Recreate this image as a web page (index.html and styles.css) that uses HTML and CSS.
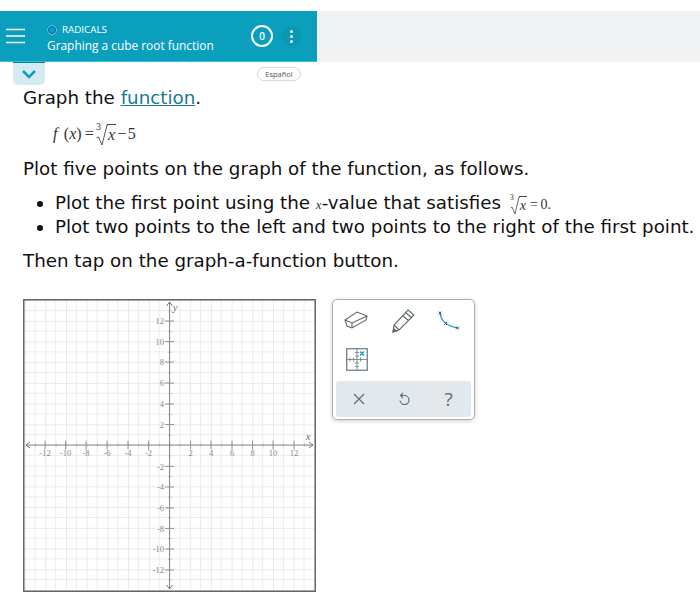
FILE: index.html
```html
<!DOCTYPE html>
<html lang="en">
<head>
<meta charset="UTF-8" />
<title>Graphing a cube root function</title>
<link rel="stylesheet" href="styles.css">
</head>
<body>
<!-- Top bar -->
<div class="topbar">
  <div class="topbar-main">
    <svg class="menu" width="20" height="16" viewBox="0 0 20 16"><path d="M0 1.500h19M0 8h19M0 14.500h19" stroke="#fff" stroke-width="1.600"/></svg>
    <div class="titles">
      <div class="topic"><span class="topic-dot"></span>RADICALS</div>
      <div class="title">Graphing a cube root function</div>
    </div>
    <div class="score">0</div>
    <div class="more"><i></i><i></i><i></i></div>
  </div>
</div>

<div class="subbar">
  <div class="drop">
    <svg width="16" height="10" viewBox="0 0 16 10"><path d="M2 2l6 6 6-6" fill="none" stroke="#0a9fbd" stroke-width="2.600"/></svg>
  </div>
  <div class="lang">Español</div>
</div>

<!-- Question text -->
<div class="question">
  <p class="intro">Graph the <a href="#">function</a>.</p>
  <div class="formula">
    <i>f</i>&#8201;&#8201;(<i>x</i>)&#8201;=&#8201;<span class="root"><sup>3</sup><svg width="12" height="22" viewBox="0 0 12 22"><path d="M0.500 14l2-1 3.500 8L11 1h1" fill="none" stroke="#444" stroke-width="0.900"/></svg><i class="radicand">x</i></span>&#8202;−&#8202;5
  </div>
  <p>Plot five points on the graph of the function, as follows.</p>
  <ul>
    <li>Plot the first point using the <i class="mathvar">x</i>-value that satisfies <span class="inline-math"><span class="root small"><sup>3</sup><svg width="10" height="19" viewBox="0 0 10 19"><path d="M0.500 12l1.500-1 3 7L9 1h1" fill="none" stroke="#444" stroke-width="0.800"/></svg><i class="radicand">x</i></span>&#8201;=&#8201;0.</span></li>
    <li>Plot two points to the left and two points to the right of the first point.</li>
  </ul>
  <p>Then tap on the graph-a-function button.</p>
</div>

<!-- Graph and tools -->
<div class="workspace">
  <svg class="graph" width="293" height="293" viewBox="0 0 293 293">
    <defs>
      <pattern id="grid" x="0" y="0" width="20.700" height="20.700" patternUnits="userSpaceOnUse" patternTransform="translate(146.500 146)">
        <path d="M0 0V20.700M0 0H20.700" stroke="#e4e4e4" stroke-width="1.500" fill="none"/>
        <path d="M10.350 0V20.700M0 10.350H20.700" stroke="#ececec" stroke-width="1" fill="none"/>
      </pattern>
      <pattern id="ticks-x" x="0" y="0" width="10.350" height="10" patternUnits="userSpaceOnUse" patternTransform="translate(146.500 141)">
        <path d="M0 3V7" stroke="#aaa" stroke-width="1"/>
      </pattern>
      <pattern id="ticks-y" x="0" y="0" width="10" height="10.350" patternUnits="userSpaceOnUse" patternTransform="translate(141.500 146)">
        <path d="M3 0H8" stroke="#aaa" stroke-width="1"/>
      </pattern>
    </defs>
    <rect width="293" height="293" fill="url(#grid)"/>
    <rect x="3" y="141" width="287" height="10" fill="url(#ticks-x)"/>
    <rect x="141.500" y="3" width="10" height="287" fill="url(#ticks-y)"/>
    <path d="M3 146H290M146.500 3V290" stroke="#888" stroke-width="1"/>
    <path d="M7 143l-4 3 4 3M286 143l4 3-4 3M143.500 7l3-4 3 4M143.500 286l3 4 3-4" fill="none" stroke="#777" stroke-width="1"/>
    <path d="M22 141.500v9M42.500 141.500v9M63 141.500v9M84 141.500v9M105 141.500v9M125.500 141.500v9M167.500 141.500v9M188 141.500v9M209 141.500v9M229.500 141.500v9M250 141.500v9M271 141.500v9" stroke="#999"/>
    <path d="M142 22h9M142 42.500h9M142 63h9M142 84h9M142 105h9M142 125.500h9M142 167.500h9M142 188h9M142 209h9M142 229.500h9M142 250h9M142 271h9" stroke="#999"/>
    <g class="tick-labels x-labels">
      <text x="22" y="157">-12</text><text x="42.500" y="157">-10</text><text x="63" y="157">-8</text><text x="84" y="157">-6</text><text x="105" y="157">-4</text><text x="125.500" y="157">-2</text>
      <text x="167.500" y="157">2</text><text x="188" y="157">4</text><text x="209" y="157">6</text><text x="229.500" y="157">8</text><text x="250" y="157">10</text><text x="271" y="157">12</text>
    </g>
    <g class="tick-labels y-labels">
      <text x="141" y="25">12</text><text x="141" y="45.500">10</text><text x="141" y="66">8</text><text x="141" y="87">6</text><text x="141" y="108">4</text><text x="141" y="128.500">2</text>
      <text x="141" y="170.500">-2</text><text x="141" y="191">-4</text><text x="141" y="212">-6</text><text x="141" y="232.500">-8</text><text x="141" y="253">-10</text><text x="141" y="274">-12</text>
    </g>
    <text class="axis-name" x="283" y="141">x</text>
    <text class="axis-name" x="150" y="12">y</text>
    <rect x="0.750" y="0.750" width="291.500" height="291.500" fill="none" stroke="#666" stroke-width="1.500"/>
  </svg>

  <div class="tools">
    <div class="tool-grid">
      <svg width="26" height="20" viewBox="0 0 26 20" fill="none" stroke="#5f6b70" stroke-width="1.100"><path d="M1 9L13 1l10 4-1 4-14 8-5-2z"/><path d="M1 9l7 3L23 5M8 12v5"/></svg>
      <svg width="24" height="24" viewBox="0 0 24 24" fill="none" stroke="#5f6b70" stroke-width="1.100"><path d="M17 1l6 5L8 21l-6 2 1-7z"/><path d="M14.500 3.500l6 5M11.500 6.500l6 5M3 16l5 5"/><path d="M2 23l0.700-3.500 2.800 2.600z" fill="#5f6b70"/></svg>
      <svg width="24" height="24" viewBox="0 0 24 24" fill="none"><path d="M3 4c1 8 6 13 18 15" stroke="#0a9fbd" stroke-width="1.300"/><path d="M1.500 2.500l3 3M4.500 2.500l-3 3M7 13l3 3M10 13l-3 3M19 17.500l3 3M22 17.500l-3 3" stroke="#4d5a60" stroke-width="1"/></svg>
      <svg width="22" height="23" viewBox="0 0 22 23" fill="none"><rect x="0.750" y="0.750" width="20.500" height="21.500" stroke="#68767c" stroke-width="1.200"/><path d="M1 11.500h20M11 1v21" stroke="#68767c" stroke-width="0.800" /><path d="M4 9.500v4M7.500 9.500v4M14.500 9.500v4M9 4.500h4M9 8h4M9 15h4M9 18.500h4" stroke="#68767c" stroke-width="0.800"/><path d="M14 3.500l4 4M18 3.500l-4 4" stroke="#0a9fbd" stroke-width="1.400"/></svg>
    </div>
    <div class="tool-actions">
      <svg width="12" height="12" viewBox="0 0 12 12"><path d="M1 1l10 10M11 1L1 11" stroke="#5f6b70" stroke-width="1.100"/></svg>
      <svg width="12" height="14" viewBox="0 0 12 14" fill="none" stroke="#5f6b70" stroke-width="1.100"><path d="M2.500 3.500h4a4.500 4.500 0 1 1-4.500 5"/><path d="M5 1L2.500 3.500 5 6"/></svg>
      <span class="help">?</span>
    </div>
  </div>
</div>
</body>
</html>
```

FILE: styles.css
```css
body {
margin: 0;
padding-top: 11px;
background: #fff;
color: #111;
font-family: "DejaVu Sans", sans-serif;
font-size: 18.270px;
overflow: hidden;
}
.topbar {
height: 51px;
background: #f0f2f3;
}
.topbar-main {
width: 317px;
height: 50px;
background: #0a9fbd;
border-bottom: 1px solid #2fc0d8;
display: flex;
align-items: center;
color: #fff;
font-family: "Open Sans", sans-serif;
}
.menu {
margin-left: 6px;
}
.titles {
margin-left: 21px;
width: 204px;
padding-top: 3px;
}
.topic {
display: flex;
align-items: center;
font-size: 9.800px;
line-height: 14px;
}
.topic-dot {
width: 6px;
height: 6px;
margin: 0 6px 0 1px;
border: 1.500px solid #0b5fb0;
border-radius: 50%;
box-shadow: 0 0 0 0.500px #cdeef5;
}
.title {
font-size: 11.900px;
font-weight: 500;
line-height: 16px;
white-space: nowrap;
}
.score {
width: 18px;
height: 18px;
border: 2px solid #fff;
border-radius: 50%;
font-size: 10px;
font-weight: 600;
line-height: 18px;
text-align: center;
}
.more {
width: 20px;
height: 20px;
margin-left: 8px;
border-radius: 50%;
background: #0b97b3;
display: flex;
flex-direction: column;
align-items: center;
justify-content: center;
gap: 2px;
}
.more i {
width: 3px;
height: 3px;
border-radius: 50%;
background: #fff;
}
.subbar {
width: 301px;
height: 24px;
display: flex;
justify-content: space-between;
align-items: flex-start;
}
.drop {
width: 32px;
height: 22px;
margin-left: 13px;
border-top: 1px solid #087f97;
border-radius: 0 0 5px 5px;
background: #d5ebf2;
display: flex;
align-items: center;
justify-content: center;
}
.lang {
width: 42px;
height: 12px;
margin-top: 5px;
border: 1px solid #d4d8da;
border-radius: 7px;
color: #555;
font-family: "Open Sans", sans-serif;
font-size: 7.500px;
line-height: 12px;
text-align: center;
}
.question {
padding-left: 23px;
white-space: nowrap;
}
p {
margin: 0;
line-height: 24px;
}
.intro a {
color: #1a7a96;
}
.formula {
height: 42px;
margin-left: 30px;
margin-top: 5px;
font-family: "Liberation Serif", serif;
font-size: 16px;
color: #333;
line-height: 38px;
}
.root {
display: inline-flex;
align-items: flex-start;
vertical-align: middle;
height: 22px;
line-height: 20px;
margin-left: -1px;
}
.root sup {
font-size: 10px;
line-height: 10px;
margin-top: -2px;
margin-right: -5px;
}
.radicand {
border-top: 1px solid #444;
padding: 0 1px;
margin-left: -1px;
}
.root.small {
height: 19px;
line-height: 18px;
margin-left: 3px;
}
.root.small sup {
font-size: 8px;
line-height: 8px;
margin-right: -4px;
}
.mathvar {
font-family: "Liberation Serif", serif;
font-size: 13px;
color: #333;
}
.inline-math {
font-family: "Liberation Serif", serif;
font-size: 14px;
color: #333;
}
ul {
margin: 10px 0 10px;
padding-left: 32px;
}
li {
height: 24px;
line-height: 24px;
}
.workspace {
display: flex;
align-items: flex-start;
margin: 26px 0 0 23px;
}
.graph {
display: block;
flex: none;
}
.tick-labels text {
font-family: "Liberation Serif", serif;
font-size: 8.500px;
fill: #888;
}
.x-labels text {
text-anchor: middle;
}
.y-labels text {
text-anchor: end;
}
.axis-name {
font-family: "Liberation Serif", serif;
font-size: 10px;
font-style: italic;
fill: #666;
}
.tools {
width: 143px;
height: 121px;
margin-left: 16px;
box-sizing: border-box;
border: 1px solid #a9b1b5;
border-radius: 5px;
box-shadow: 0 1px 4px rgba(0,0,0,0.2);
background: #fff;
padding: 3px 3px 2px;
display: flex;
flex-direction: column;
justify-content: space-between;
}
.tool-grid {
display: grid;
grid-template-columns: repeat(3, 46px);
grid-template-rows: 36px 41px;
margin-left: -2px;
align-items: center;
justify-items: center;
}
.tool-actions {
height: 36px;
border-radius: 3px;
background: #e3e8ec;
display: grid;
grid-template-columns: repeat(3, 45px);
align-items: center;
justify-items: center;
}
.help {
color: #5f6b70;
font-family: "Open Sans", sans-serif;
font-size: 19px;
}
```
